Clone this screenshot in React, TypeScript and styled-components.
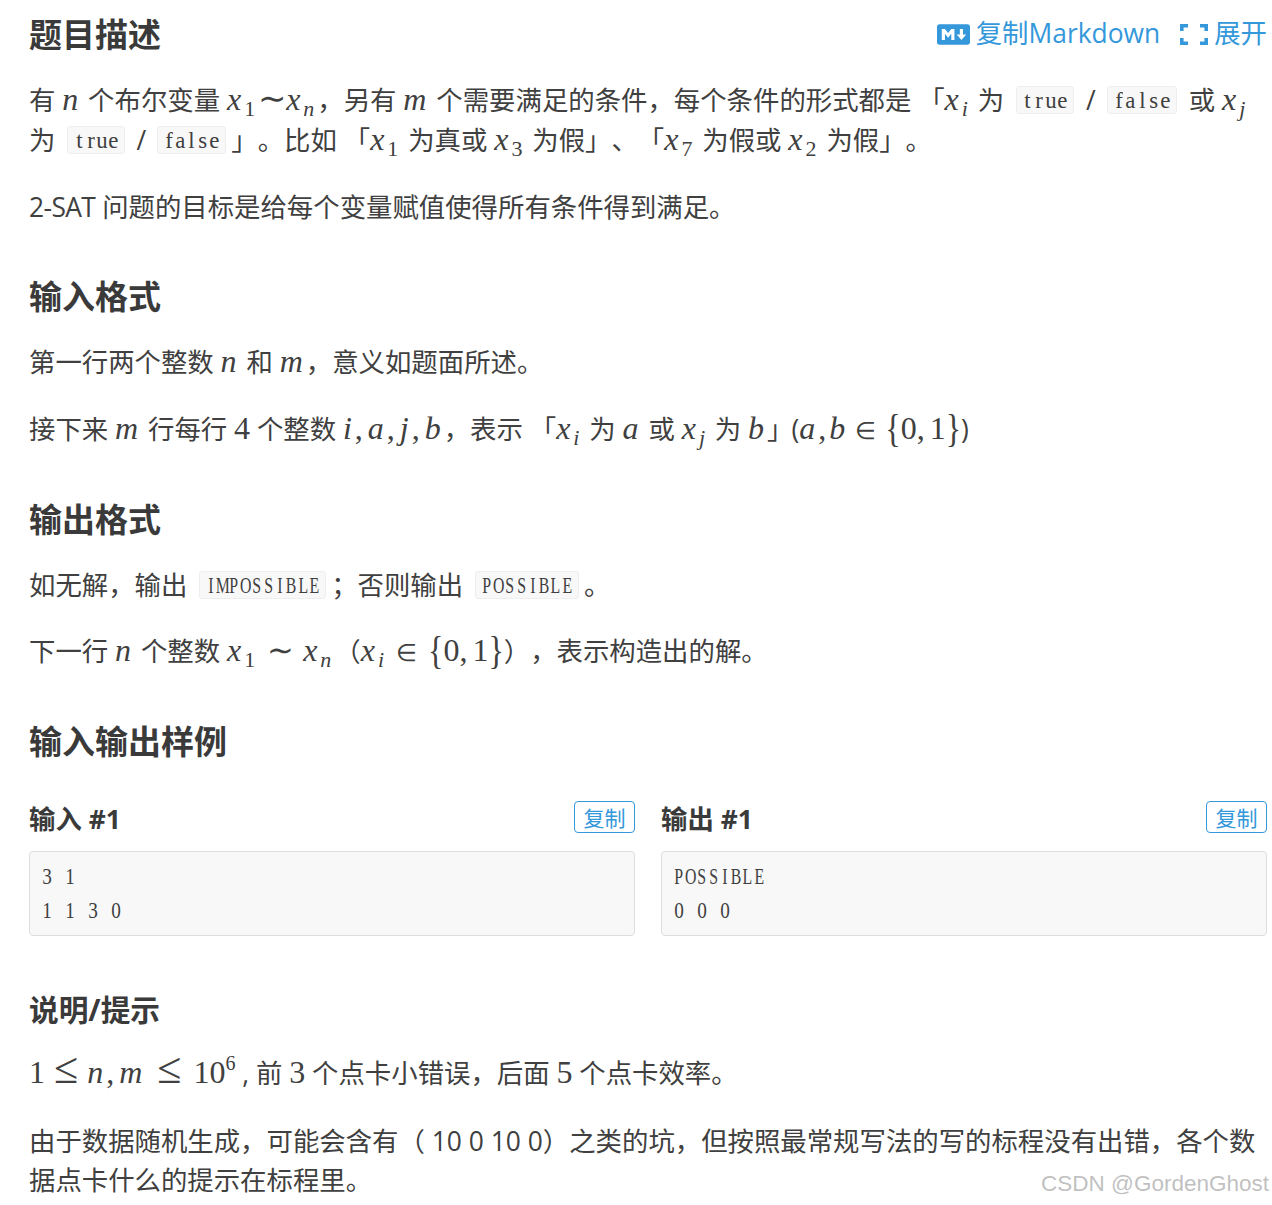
import React from 'react'
import styled, { createGlobalStyle } from 'styled-components'
import { FaMarkdown } from 'react-icons/fa'

const GlobalStyle = createGlobalStyle`
  html, body {
    margin: 0;
    padding: 0;
    background: #fff;
  }
  body {
    font-family: "Open Sans", "Noto Sans CJK SC", sans-serif;
    font-size: 26.4px;
    line-height: 39.6px;
    color: #404040;
    text-spacing-trim: space-all;
  }
`

const Page = styled.div`
  position: relative;
  box-sizing: border-box;
  width: 1272px;
  height: 1205px;
  padding: 10px 5px 0 29px;
  overflow: hidden;
`

const TitleRow = styled.div`
  display: flex;
  justify-content: space-between;
  align-items: flex-start;
`

const Heading = styled.h2<{ $top?: number; $bottom?: number; $size?: number }>`
  margin: ${p => p.$top ?? 45}px 0 ${p => p.$bottom ?? 21}px;
  font-size: ${p => p.$size ?? 33}px;
  line-height: 50px;
  font-weight: 700;
  color: #3a3a3a;
`

const Actions = styled.div`
  display: flex;
  align-items: center;
  gap: 20px;
  height: 48px;
`

const ActionLink = styled.a`
  display: inline-flex;
  align-items: center;
  gap: 6px;
  color: #3498db;
  white-space: nowrap;
`

const Para = styled.p<{ $top?: number }>`
  margin: ${p => p.$top ?? 0}px 0 0;
  white-space: nowrap;
`

const Tight = styled.span`
  letter-spacing: -0.6px;
`

const M = styled.i`
  font-family: "Liberation Serif", serif;
  font-size: 32px;
  line-height: 0;
  font-style: italic;
  letter-spacing: 3px;
`

const N = styled.span`
  font-family: "Liberation Serif", serif;
  font-size: 32px;
  line-height: 0;
`

const Comma = styled(N)<{ $right?: number }>`
  margin-right: ${p => p.$right ?? 5}px;
`

const Paren = styled.span`
  margin-left: -2px;
`

const Rel = styled.span<{ $gap?: number; $size?: number }>`
  font-family: "Liberation Serif", serif;
  font-size: ${p => p.$size ?? 44}px;
  line-height: 0;
  margin: 0 ${p => p.$gap ?? 9}px;
`

const Sub = styled.sub`
  margin-right: 3px;
  font-family: "Liberation Serif", serif;
  font-size: 22px;
  line-height: 0;
  vertical-align: -6px;
`

const Sup = styled.sup`
  font-family: "Liberation Serif", serif;
  font-size: 20px;
  line-height: 0;
  vertical-align: 13px;
`

const Brace = styled.span<{ $left?: number }>`
  display: inline-block;
  margin-left: ${p => p.$left ?? 0}px;
  font-family: "Liberation Serif", serif;
  font-size: 32px;
  line-height: 0;
  transform: scaleY(1.25);
`

const Code = styled.code`
  display: inline-block;
  box-sizing: border-box;
  height: 28px;
  margin: 0 5px;
  padding: 0 5px;
  border: 1px solid #eee;
  border-radius: 3px;
  background: #f8f8f8;
  font-size: 24px;
  line-height: 26px;
  vertical-align: 2px;
`

const Cell = styled.span`
  display: inline-block;
  width: 11.5px;
  text-align: center;
`

const Glyph = styled.span<{ $scale: number }>`
  display: inline-block;
  margin: 0 -8px;
  font-family: "Liberation Serif", serif;
  transform: scaleX(${p => p.$scale});
`

const SampleGrid = styled.div`
  display: grid;
  grid-template-columns: 606px 606px;
  gap: 26px;
  margin-top: 34px;
`

const SampleHead = styled.div`
  display: flex;
  justify-content: space-between;
  align-items: center;
  height: 32px;
  margin-bottom: 18px;
`

const SampleTitle = styled.strong`
  margin-top: 6px;
  font-size: 26.4px;
  font-weight: 700;
  color: #3a3a3a;
`

const CopyButton = styled.button`
  box-sizing: border-box;
  width: 61px;
  height: 32px;
  padding: 0;
  border: 1px solid #3498db;
  border-radius: 4px;
  background: #fff;
  color: #3498db;
  font-family: "Noto Sans CJK SC", sans-serif;
  font-size: 21px;
  line-height: 28px;
`

const Pre = styled.pre`
  box-sizing: border-box;
  height: 85px;
  margin: 0;
  padding: 7px 11px;
  border: 1px solid #ddd;
  border-radius: 4px;
  background: #f8f8f8;
  font-family: "Liberation Serif", serif;
  font-size: 24px;
  line-height: 34px;
`

const Watermark = styled.div`
  position: absolute;
  right: 3px;
  bottom: 1px;
  color: rgba(130, 130, 130, 0.5);
  font-family: "Liberation Sans", sans-serif;
  font-size: 22.5px;
  line-height: 40px;
`

const ExpandIcon = () => (
  <svg width="28" height="21" viewBox="0 0 28 21" fill="none" stroke="#3498db" strokeWidth="3.6">
    <path d="M8 1.8H1.8V7M20 1.8H26.2V7M8 19.2H1.8V14M20 19.2H26.2V14" />
  </svg>
)

// the monospace face of the original is not installed, so each character sits in a fixed cell
const glyphScale = (ch: string) => (/[A-Z]/.test(ch) ? 0.66 : /\d/.test(ch) ? 0.8 : 0.95)

const Mono = ({ text }: { text: string }) => (
  <>
    {text.split('').map((ch, i) => (
      <Cell key={i}>
        <Glyph $scale={glyphScale(ch)}>{ch === ' ' ? '\u00a0' : ch}</Glyph>
      </Cell>
    ))}
  </>
)

const samples = [
  { title: '输入 #1', lines: ['3 1', '1 1 3 0'] },
  { title: '输出 #1', lines: ['POSSIBLE', '0 0 0'] }
]

export default function App() {
  return (
    <Page>
      <GlobalStyle />
      <TitleRow>
        <Heading $top={0}>题目描述</Heading>
        <Actions>
          <ActionLink>
            <FaMarkdown size={33} />
            复制Markdown
          </ActionLink>
          <ActionLink>
            <ExpandIcon />
            展开
          </ActionLink>
        </Actions>
      </TitleRow>
      <Para>
        有 <M>n</M> 个布尔变量 <M>x</M><Sub>1</Sub><Rel $gap={0} $size={34}>∼</Rel><M>x</M><Sub><i>n</i></Sub>，另有 <M>m</M> 个需要满足的条件，每个条件的形式都是 「<M>x</M><Sub><i>i</i></Sub> 为 <Code><Mono text="true" /></Code> / <Code><Mono text="false" /></Code> 或 <M>x</M><Sub><i>j</i></Sub>
      </Para>
      <Para>
        为 <Code><Mono text="true" /></Code><Tight> / </Tight><Code><Mono text="false" /></Code>」。比如 「<M>x</M><Sub>1</Sub> 为真或 <M>x</M><Sub>3</Sub> 为假」、「<M>x</M><Sub>7</Sub> 为假或 <M>x</M><Sub>2</Sub> 为假」。
      </Para>
      <Para $top={28}><Tight>2-SAT</Tight> 问题的目标是给每个变量赋值使得所有条件得到满足。</Para>

      <Heading $top={44}>输入格式</Heading>
      <Para>第一行两个整数 <M>n</M> 和 <M>m</M>，意义如题面所述。</Para>
      <Para $top={28}>
        接下来 <M>m</M> 行每行 <N>4</N> 个整数 <M>i</M><Comma>,</Comma><M>a</M><Comma>,</Comma><M>j</M><Comma>,</Comma><M>b</M>，表示 「<M>x</M><Sub><i>i</i></Sub> 为 <M>a</M> 或 <M>x</M><Sub><i>j</i></Sub> 为 <M>b</M>」<Paren>(</Paren><M>a</M><Comma $right={3}>,</Comma><M>b</M><Rel $gap={7} $size={24}>∈</Rel><Brace $left={2}>{'{'}</Brace><N>0</N><Comma>,</Comma><N>1</N><Brace>{'}'}</Brace>)
      </Para>

      <Heading>输出格式</Heading>
      <Para>如无解，输出 <Code><Mono text="IMPOSSIBLE" /></Code>；否则输出 <Code><Mono text="POSSIBLE" /></Code>。</Para>
      <Para $top={26}>
        下一行 <M>n</M> 个整数 <M>x</M><Sub>1</Sub><Rel $size={32}>∼</Rel><M>x</M><Sub><i>n</i></Sub>（<M>x</M><Sub><i>i</i></Sub><Rel $size={24}>∈</Rel><Brace $left={2}>{'{'}</Brace><N>0</N><Comma>,</Comma><N>1</N><Brace>{'}'}</Brace>），表示构造出的解。
      </Para>

      <Heading $top={46} $bottom={20}>输入输出样例</Heading>
      <SampleGrid>
        {samples.map(s => (
          <div key={s.title}>
            <SampleHead>
              <SampleTitle>{s.title}</SampleTitle>
              <CopyButton>复制</CopyButton>
            </SampleHead>
            <Pre>
              {s.lines.map(line => (
                <div key={line}><Mono text={line} /></div>
              ))}
            </Pre>
          </div>
        ))}
      </SampleGrid>

      <Heading $top={49} $bottom={19} $size={29.7}>说明/提示</Heading>
      <Para>
        <N>1</N><Rel>≤</Rel><M>n</M><Comma>,</Comma><M>m</M><Rel $gap={12}>≤</Rel><N>10</N><Sup>6</Sup> , 前 <N>3</N> 个点卡小错误，后面 <N>5</N> 个点卡效率。
      </Para>
      <Para $top={28}>由于数据随机生成，可能会含有（ 10 0 10 0）之类的坑，但按照最常规写法的写的标程没有出错，各个数</Para>
      <Para>据点卡什么的提示在标程里。</Para>
      <Watermark>CSDN @GordenGhost</Watermark>
    </Page>
  )
}
